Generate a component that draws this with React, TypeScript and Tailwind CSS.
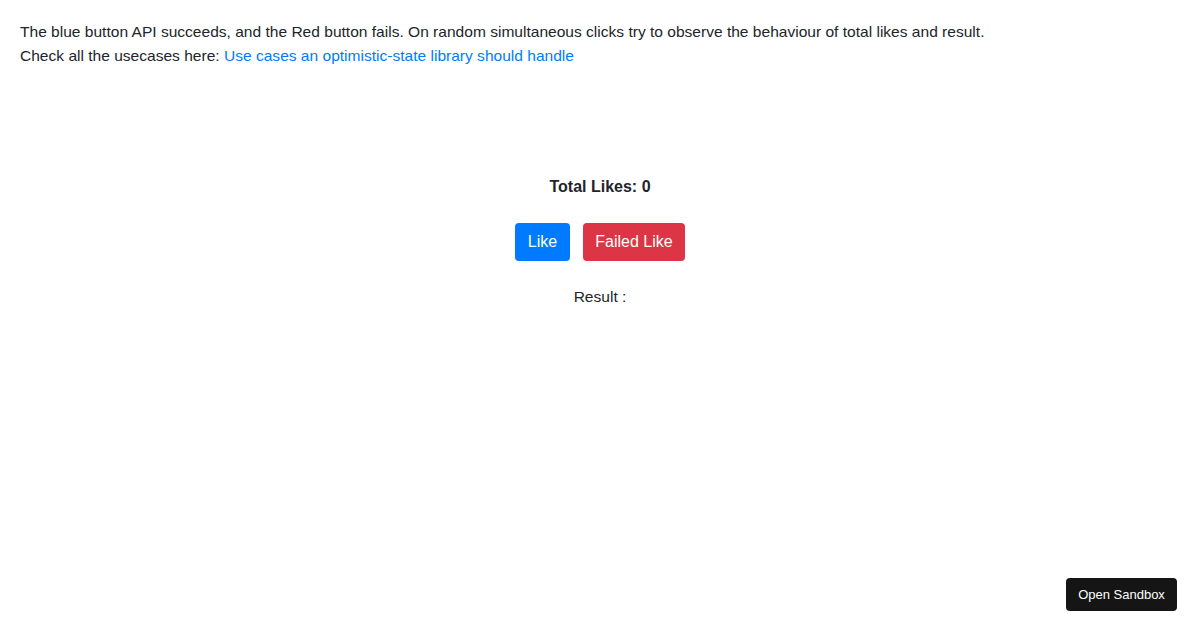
export default function App() {
  return (
    <div className="min-h-[630px] bg-white text-[#212529] font-['Liberation_Sans',Arial,sans-serif] text-base leading-6 px-5 pt-5">
      <p className="text-[15.56px] leading-6">
        The blue button API succeeds, and the Red button fails. On random simultaneous clicks try to observe the behaviour of total likes and result.
        <br />
        Check all the usecases here:{' '}
        <a href="#" className="text-[#007bff]">
          Use cases an optimistic-state library should handle
        </a>
      </p>

      <div className="mt-[107px] flex flex-col items-center">
        <div className="font-bold">Total Likes: 0</div>
        <div className="mt-[24px] flex gap-[13px]">
          <button className="h-[38px] w-[55px] rounded bg-[#007bff] text-white">Like</button>
          <button className="h-[38px] w-[102px] rounded bg-[#dc3545] text-white">Failed Like</button>
        </div>
        <div className="mt-[24px] text-[15.56px]">Result :</div>
      </div>

      <button className="fixed right-[23px] bottom-[19px] h-[33px] w-[111px] rounded bg-[#151515] text-white text-[13px] font-['Liberation_Sans',Arial,sans-serif]">
        Open Sandbox
      </button>
    </div>
  );
}
